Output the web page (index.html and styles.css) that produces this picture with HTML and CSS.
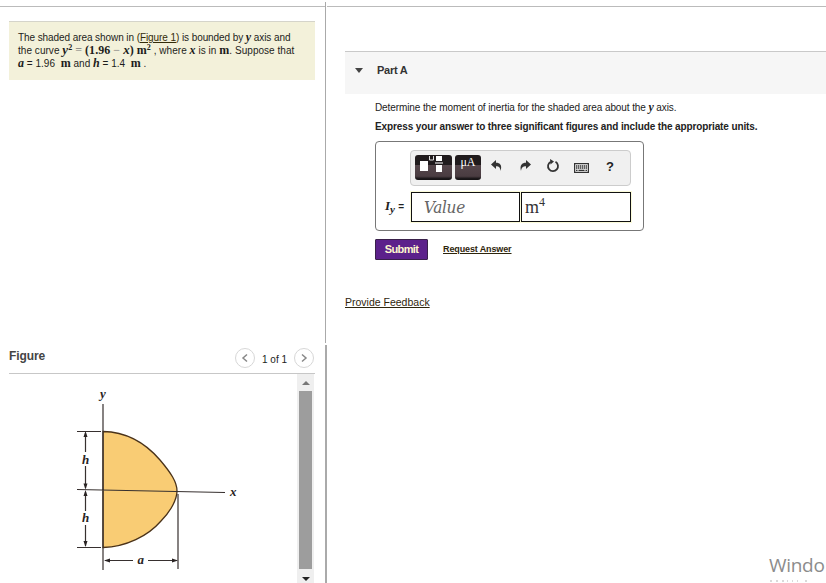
FILE: index.html
```html
<!DOCTYPE html>
<html lang="en">
<head>
<meta charset="utf-8">
<title>Moment of inertia</title>
<link rel="stylesheet" href="styles.css">
</head>
<body>
<div class="page">
  <aside class="left">
    <section class="problem">
      <div class="line l1">The shaded area shown in <a class="fig">(<u>Figure 1</u>)</a> is bounded by <b class="v">y</b> axis and</div>
      <div class="line l2">the curve <span class="eq"><b class="v">y</b><sup>2</sup> <span class="op">=</span> (1.96 <span class="op">−</span> <b class="v">x</b>) m<sup>2</sup></span> , where <b class="v">x</b> is in <b class="m">m</b>. Suppose that</div>
      <div class="line l3"><b class="v">a</b> = 1.96 &nbsp;<b class="m">m</b> and <b class="v">h</b> = 1.4 &nbsp;<b class="m">m</b> .</div>
    </section>
    <section class="figure">
      <header class="fighead">
        <h2>Figure</h2>
        <span class="round"><svg width="8" height="10" viewBox="0 0 8 10"><path d="M6 1.5 2 5l4 3.5"/></svg></span>
        <span class="count">1 of 1</span>
        <span class="round"><svg width="8" height="10" viewBox="0 0 8 10"><path d="M2 1.5 6 5 2 8.5"/></svg></span>
      </header>
      <div class="figbody">
        <svg class="diagram" width="288" height="209" viewBox="9 374 288 209">
          <path d="M103 431.500C129 432 148 446 160 460C171 473 177 482 177 491C177 499 171 511 161 521C148 536 126 547 103 547.500Z" fill="#f9cc74" stroke="#4a3219" stroke-width="1.300"/>
          <g stroke="#37302f" stroke-width="1.200" fill="none">
            <path d="M103 404V570M77 431.500H101M77 547.500H101M77 489.500 225 492.500M178 494V569"/>
            <path d="M85.500 433V452M85.500 466V488M85.500 492V511M85.500 525V546M105 560.500H133M148 560.500H177"/>
          </g>
          <path fill="#292323" d="m85.500 431-2 6h4zM85.500 489.500l-2-6h4zM85.500 490l-2 6h4zM85.500 547l-2-6h4zM104 560.500l6-2v4zM178 560.500l-6-2v4z"/>
          <g class="labels"><text x="100" y="398">y</text><text x="230" y="496">x</text><text x="82" y="464">h</text><text x="82" y="522">h</text><text x="137.500" y="564">a</text></g>
        </svg>
        <div class="scroll"><i class="up"></i><i class="thumb"></i><i class="down"></i></div>
      </div>
    </section>
  </aside>
  <div class="divider"><i class="thin"></i><i class="thick"></i></div>
  <main class="right">
    <header class="part"><i class="caret"></i><h2>Part A</h2></header>
    <div class="content">
      <p class="ask">Determine the moment of inertia for the shaded area about the <b class="v">y</b> axis.</p>
      <p class="express">Express your answer to three significant figures and include the appropriate units.</p>
      <div class="answer">
        <div class="tools">
          <span class="tool wide"><svg width="37" height="25" viewBox="0 0 37 25"><path fill="#fff" d="M5 6h8v10H5zM21 1h6v5h-6zM21 10h6v7h-6zM20 7.500h8v1h-8z"/><path d="M14.500 1v4h4V1" fill="none" stroke="#ddd"/></svg></span>
          <span class="tool mu">μA</span>
          <svg class="ic undo" width="12" height="12" viewBox="0 0 12 12"><path d="M0 4.500 5 0v2.700C9 2.700 11.500 5 9.500 11 9.300 7.500 8 6.200 5 6.200V9z"/></svg>
          <svg class="ic redo" width="12" height="12" viewBox="0 0 12 12"><path d="M12 4.500 7 0v2.700C3 2.700 .5 5 2 11 2.500 7.500 4 6.200 7 6.200V9z"/></svg>
          <svg class="ic reset" width="14" height="14" viewBox="0 0 14 14"><path d="M9.500 2.800A5 5 0 1 1 4.700 2.700" fill="none" stroke="#333" stroke-width="1.800"/><path d="M4 0 8 2.500 4.500 5.500z"/></svg>
          <svg class="ic keyb" width="15" height="10" viewBox="0 0 15 10"><rect x=".6" y=".6" width="13.800" height="8.800" fill="#eee" stroke="#333" stroke-width="1.200"/><path d="M2 3h11M2 5h11" stroke="#333" stroke-width="1.300" stroke-dasharray="1.400 .6"/><path d="M2 7.300h1.500M4.500 7.300h6M11.500 7.300H13" stroke="#333" stroke-width="1.200"/></svg>
          <span class="help">?</span>
        </div>
        <div class="inputs">
          <span class="iy"><i>I</i><sub>y</sub> <small>=</small></span>
          <span class="field value">Value</span>
          <span class="field unit">m<sup>4</sup></span>
        </div>
      </div>
      <div class="actions"><button>Submit</button><a>Request Answer</a></div>
    </div>
    <a class="feedback">Provide Feedback</a>
    <div class="watermark">Windo</div>
    <svg class="tips" width="57" height="2" viewBox="0 0 57 2"><path d="M1 1h2M7 1h2M13 1h2M18 1h1M23 1h1M28 1h1M36 1h2" stroke="#b5b5b5"/></svg>
  </main>
</div>
</body>
</html>
```
FILE: styles.css
```css
* { box-sizing: border-box; }
body { margin: 0; background: #fff; color: #222; font: 10px/13px "Liberation Sans", Arial, sans-serif; }
h2, p { margin: 0; }
.page { width: 826px; height: 583px; overflow: hidden; display: grid; grid-template-columns: 325px 2px 499px; }
.left { border-top: 1px solid #bbb; margin-top: 6px; height: 577px; padding: 14px 10px 0 9px; display: flex; flex-direction: column; justify-content: space-between; }
.problem { width: 306px; height: 59px; background: #f3f1da; border-top: 1px solid #d5d4ca; padding: 9px 0 0 9px; }
.line { white-space: nowrap; height: 13px; line-height: 14px; color: #1d1d1b; }
.l1 { letter-spacing: -.08px; }
.l2 { letter-spacing: .04px; }
.l3 { letter-spacing: .02px; }
.line sup { font-size: 8px; line-height: 0; vertical-align: 4px; }
.fig { color: #332b09; }
.v { font: italic bold 12px/0 "Liberation Serif", serif; }
.m { font: bold 12px/0 "Liberation Serif", serif; }
.eq { font: bold 12px/0 "Liberation Serif", serif; }
.eq .v { font-size: 13px; }
.op { font-weight: normal; color: #777; }
.figure { height: 241px; }
.fighead { height: 32px; border-bottom: 1px solid #c7c7c7; display: flex; align-items: center; padding-top: 1px; width: 306px; }
.fighead h2 { font-size: 12px; color: #444; width: 226px; padding-bottom: 3px; letter-spacing: -.1px; }
.round { width: 20px; height: 20px; border: 1px solid #d7d7d7; border-radius: 50%; display: flex; align-items: center; justify-content: center; flex: none; }
.round path { fill: none; stroke: #888; stroke-width: 1.5; }
.count { width: 39px; text-align: center; padding-top: 2px; white-space: nowrap; }
.figbody { display: flex; }
.diagram { display: block; }
.labels { font: italic bold 13px "Liberation Serif", serif; fill: #292323; }
.scroll { width: 17px; height: 209px; background: #efefef; display: flex; flex-direction: column; align-items: center; }
.up { border: 4px solid transparent; border-top: 0; border-bottom: 4px solid #777; margin: 7px 0 6px; }
.thumb { width: 13px; height: 178px; background: #9d9d9d; }
.down { border: 4px solid transparent; border-bottom: 0; border-top: 4px solid #222; margin-top: 8px; }
.divider { display: flex; flex-direction: column; }
.thin { width: 1px; height: 341px; margin: 2px 0 2px; background: #aaa; flex: none; }
.thick { width: 2px; height: 238px; background: #aaa; }
.right { border-top: 1px solid #bbb; margin-top: 6px; height: 577px; padding: 44px 0 0 18px; display: flex; flex-direction: column; }
.part { height: 43px; background: #f6f6f6; border-top: 1px solid #c9c9c9; display: flex; align-items: center; padding: 0 0 5px 10px; flex: none; }
.caret { border: 4.5px solid transparent; border-top: 5px solid #444; border-bottom: 0; margin-right: 14px; }
.part h2 { font-size: 11px; color: #333; letter-spacing: -.25px; }
.content { padding: 7px 0 0 30px; }
.ask { height: 19px; line-height: 14px; white-space: nowrap; letter-spacing: -.1px; }
.express { font-weight: bold; height: 21px; line-height: 14px; white-space: nowrap; letter-spacing: -.12px; }
.answer { width: 269px; height: 90px; border: 1px solid #777; border-radius: 4px; padding: 8px 0 0 6px; }
.tools { width: 221px; height: 36px; margin-left: 28px; background: #f0f0f0; border: 1px solid #ccc; border-radius: 4px; display: flex; align-items: center; padding: 0 0 2px 4px; }
.tool { height: 25px; border-radius: 3px; background: linear-gradient(#201b1d 0 40%, #55464b 41%, #4a3c41 85%, #171416 95%); color: #fff; flex: none; }
.wide { width: 37px; margin-right: 3px; }
.mu { width: 26px; text-align: center; font: 12px/14px "Liberation Serif", serif; }
.ic { fill: #333; flex: none; }
.undo { margin-left: 10px; margin-top: -2px; }
.redo { margin-left: 16px; margin-top: -2px; }
.reset { margin-left: 15px; margin-top: -2px; }
.keyb { margin-left: 14px; margin-top: 1px; }
.help { font: bold 13px "Liberation Sans", Arial, sans-serif; margin-left: 17px; margin-top: -2px; }
.inputs { display: flex; margin-top: 6px; }
.iy { width: 29px; padding: 7px 0 0 3px; white-space: nowrap; font: bold 13px/13px "Liberation Serif", serif; }
.iy sub { font: italic bold 11px/0 "Liberation Serif", serif; vertical-align: -3px; }
.iy small { font: bold 10px "Liberation Sans", Arial, sans-serif; }
.field { height: 30px; border: 1px solid #111; box-shadow: 0 0 0 1px #fbfbd9; margin-right: 1px; color: #333; }
.value { width: 109px; padding-left: 12px; font: italic 17px/28px "DejaVu Serif Condensed", "DejaVu Serif", "Liberation Serif", serif; letter-spacing: -.3px; color: #666; }
.unit { width: 110px; padding-left: 3px; font: 18px/28px "Liberation Serif", serif; }
.unit sup { font-size: 12px; line-height: 0; vertical-align: 7px; }
.actions { display: flex; align-items: center; margin-top: 8px; }
button { width: 53px; height: 21px; padding: 0 0 1px; background: #5c218b; border: 1px solid #39204a; border-radius: 1px; color: #fff7cf; font: bold 11px "Liberation Sans", Arial, sans-serif; letter-spacing: -.6px; }
.actions a { margin-left: 15px; font-weight: bold; font-size: 9px; text-decoration: underline; color: #2e250c; letter-spacing: -.12px; }
.feedback { font-size: 10.5px; text-decoration: underline; color: #2e250c; margin-top: 36px; }
.watermark { font: 19px/22px "Open Sans", sans-serif; letter-spacing: -.3px; color: #8c8c8c; margin: auto 0 0 424px; }
.tips { display: block; margin: 4px 0 1px 424px; flex: none; }
```
